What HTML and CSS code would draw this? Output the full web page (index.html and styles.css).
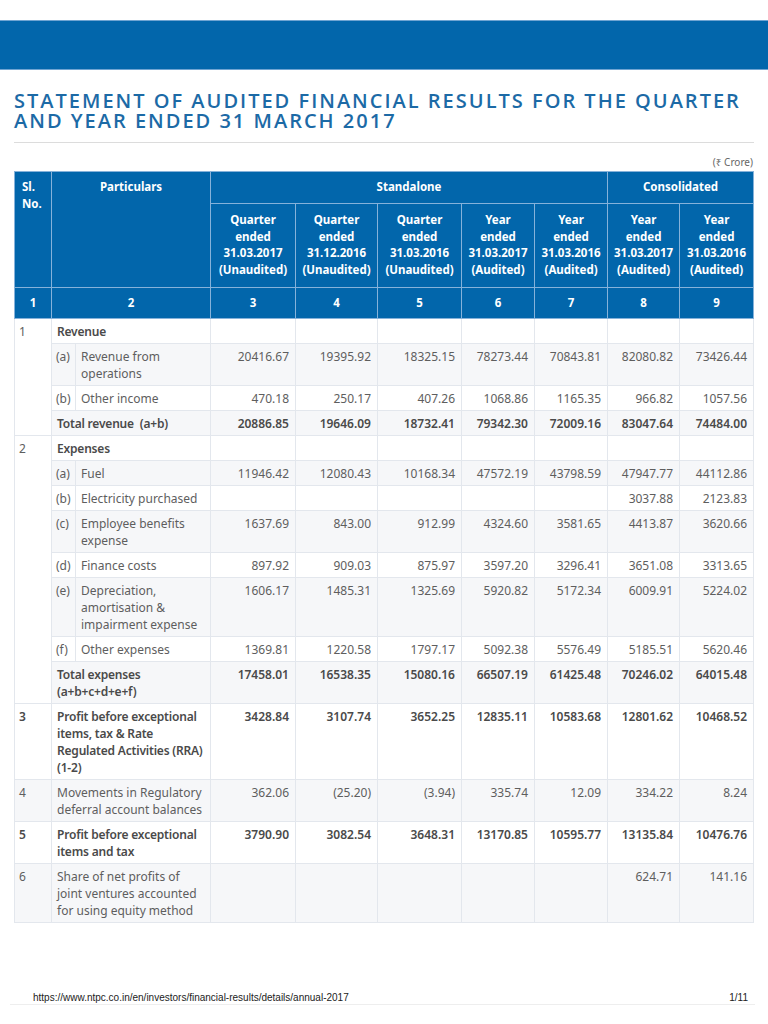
FILE: index.html
```html
<!DOCTYPE html>
<html lang="en">
<head>
<meta charset="utf-8">
<title>Statement of Audited Financial Results</title>
<link rel="stylesheet" href="styles.css">
</head>
<body>
<div class="topbar"></div>
<main class="page">
  <h1 class="title">STATEMENT OF AUDITED FINANCIAL RESULTS FOR THE QUARTER AND YEAR ENDED 31 MARCH 2017</h1>
  <div class="unit">(₹ Crore)</div>
  <table class="fin">
    <colgroup>
      <col class="c-sl"><col class="c-sub"><col class="c-label">
      <col class="c-q1"><col class="c-q2"><col class="c-q3">
      <col class="c-y6"><col class="c-y7"><col class="c-y8"><col class="c-y9">
    </colgroup>
    <thead>
      <tr>
        <th rowspan="2" class="top sl-h">Sl.<br>No.</th>
        <th rowspan="2" colspan="2" class="top">Particulars</th>
        <th colspan="5">Standalone</th>
        <th colspan="2">Consolidated</th>
      </tr>
      <tr class="sub">
        <th>Quarter<br>ended<br>31.03.2017<br>(Unaudited)</th>
        <th>Quarter<br>ended<br>31.12.2016<br>(Unaudited)</th>
        <th>Quarter<br>ended<br>31.03.2016<br>(Unaudited)</th>
        <th>Year<br>ended<br>31.03.2017<br>(Audited)</th>
        <th>Year<br>ended<br>31.03.2016<br>(Audited)</th>
        <th>Year<br>ended<br>31.03.2017<br>(Audited)</th>
        <th>Year<br>ended<br>31.03.2016<br>(Audited)</th>
      </tr>
      <tr>
        <th>1</th><th colspan="2">2</th><th>3</th><th>4</th><th>5</th><th>6</th><th>7</th><th>8</th><th>9</th>
      </tr>
    </thead>
    <tbody>
      <tr class="w">
        <td rowspan="4" class="sl">1</td>
        <td colspan="2" class="b">Revenue</td>
        <td></td><td></td><td></td><td></td><td></td><td></td><td></td>
      </tr>
      <tr class="g">
        <td class="ix">(a)</td><td>Revenue from operations</td>
        <td class="n">20416.67</td><td class="n">19395.92</td><td class="n">18325.15</td><td class="n">78273.44</td><td class="n">70843.81</td><td class="n">82080.82</td><td class="n">73426.44</td>
      </tr>
      <tr class="w">
        <td class="ix">(b)</td><td>Other income</td>
        <td class="n">470.18</td><td class="n">250.17</td><td class="n">407.26</td><td class="n">1068.86</td><td class="n">1165.35</td><td class="n">966.82</td><td class="n">1057.56</td>
      </tr>
      <tr class="g bold">
        <td colspan="2">Total revenue&nbsp; (a+b)</td>
        <td class="n">20886.85</td><td class="n">19646.09</td><td class="n">18732.41</td><td class="n">79342.30</td><td class="n">72009.16</td><td class="n">83047.64</td><td class="n">74484.00</td>
      </tr>
      <tr class="w">
        <td rowspan="8" class="sl">2</td>
        <td colspan="2" class="b">Expenses</td>
        <td></td><td></td><td></td><td></td><td></td><td></td><td></td>
      </tr>
      <tr class="g">
        <td class="ix">(a)</td><td>Fuel</td>
        <td class="n">11946.42</td><td class="n">12080.43</td><td class="n">10168.34</td><td class="n">47572.19</td><td class="n">43798.59</td><td class="n">47947.77</td><td class="n">44112.86</td>
      </tr>
      <tr class="w">
        <td class="ix">(b)</td><td>Electricity purchased</td>
        <td class="n"></td><td class="n"></td><td class="n"></td><td class="n"></td><td class="n"></td><td class="n">3037.88</td><td class="n">2123.83</td>
      </tr>
      <tr class="g">
        <td class="ix">(c)</td><td>Employee benefits expense</td>
        <td class="n">1637.69</td><td class="n">843.00</td><td class="n">912.99</td><td class="n">4324.60</td><td class="n">3581.65</td><td class="n">4413.87</td><td class="n">3620.66</td>
      </tr>
      <tr class="w">
        <td class="ix">(d)</td><td>Finance costs</td>
        <td class="n">897.92</td><td class="n">909.03</td><td class="n">875.97</td><td class="n">3597.20</td><td class="n">3296.41</td><td class="n">3651.08</td><td class="n">3313.65</td>
      </tr>
      <tr class="g">
        <td class="ix">(e)</td><td>Depreciation, amortisation &amp; impairment expense</td>
        <td class="n">1606.17</td><td class="n">1485.31</td><td class="n">1325.69</td><td class="n">5920.82</td><td class="n">5172.34</td><td class="n">6009.91</td><td class="n">5224.02</td>
      </tr>
      <tr class="w">
        <td class="ix">(f)</td><td>Other expenses</td>
        <td class="n">1369.81</td><td class="n">1220.58</td><td class="n">1797.17</td><td class="n">5092.38</td><td class="n">5576.49</td><td class="n">5185.51</td><td class="n">5620.46</td>
      </tr>
      <tr class="g bold">
        <td colspan="2">Total expenses (a+b+c+d+e+f)</td>
        <td class="n">17458.01</td><td class="n">16538.35</td><td class="n">15080.16</td><td class="n">66507.19</td><td class="n">61425.48</td><td class="n">70246.02</td><td class="n">64015.48</td>
      </tr>
      <tr class="w bold">
        <td class="sl">3</td>
        <td colspan="2">Profit before exceptional items, tax &amp; Rate Regulated Activities (RRA) (1-2)</td>
        <td class="n">3428.84</td><td class="n">3107.74</td><td class="n">3652.25</td><td class="n">12835.11</td><td class="n">10583.68</td><td class="n">12801.62</td><td class="n">10468.52</td>
      </tr>
      <tr class="g">
        <td class="sl">4</td>
        <td colspan="2">Movements in Regulatory deferral account balances</td>
        <td class="n">362.06</td><td class="n">(25.20)</td><td class="n">(3.94)</td><td class="n">335.74</td><td class="n">12.09</td><td class="n">334.22</td><td class="n">8.24</td>
      </tr>
      <tr class="w bold">
        <td class="sl">5</td>
        <td colspan="2">Profit before exceptional items and tax</td>
        <td class="n">3790.90</td><td class="n">3082.54</td><td class="n">3648.31</td><td class="n">13170.85</td><td class="n">10595.77</td><td class="n">13135.84</td><td class="n">10476.76</td>
      </tr>
      <tr class="g">
        <td class="sl">6</td>
        <td colspan="2">Share of net profits of joint ventures accounted for using equity method</td>
        <td class="n"></td><td class="n"></td><td class="n"></td><td class="n"></td><td class="n"></td><td class="n">624.71</td><td class="n">141.16</td>
      </tr>
    </tbody>
  </table>
</main>
<footer class="foot">
  <span class="url">https://www.ntpc.co.in/en/investors/financial-results/details/annual-2017</span>
  <span class="pg">1/11</span>
</footer>
</body>
</html>
```
FILE: styles.css
```css
* { box-sizing: border-box; }
html, body { margin: 0; padding: 0; background: #fff; }
body { font-family: "Noto Sans", "Liberation Sans", sans-serif; color: #5a5a5a; width: 768px; height: 1024px; position: relative; }

.topbar {
  margin-top: 20px;
  height: 50px;
  background: #0266ab;
  border-top: 1px solid #6fa4d2;
  border-bottom: 1px solid #6fa4d2;
}

.page { padding: 0 14px; }

.title {
  margin: 21px 0 0;
  padding: 0 0 11px;
  font-family: "Open Sans", "Noto Sans", sans-serif;
  font-weight: 600;
  font-size: 20px;
  line-height: 20px;
  color: #1c6aa6;
  letter-spacing: 2px;
  border-bottom: 1px solid #dcdcdc;
}

.unit {
  margin-top: 12px;
  text-align: right;
  font-size: 10px;
  line-height: 14px;
  color: #666;
  padding-right: 1px;
}

.fin {
  margin-top: 2px;
  width: 739px;
  table-layout: fixed;
  border-collapse: collapse;
  font-size: 12px;
}
.c-sl { width: 37px; }
.c-sub { width: 24px; }
.c-label { width: 135px; }
.c-q1 { width: 85px; }
.c-q2 { width: 82px; }
.c-q3 { width: 84px; }
.c-y6 { width: 73px; }
.c-y7 { width: 73px; }
.c-y8 { width: 72px; }
.c-y9 { width: 74px; }

.fin th {
  background: #0266ab;
  color: #fff;
  font-weight: 700;
  font-size: 11.5px;
  line-height: 16.5px;
  padding: 7px 2px;
  border: 1px solid #86b2da;
  text-align: center;
  vertical-align: middle;
}
.fin th.top { vertical-align: top; }
.fin th.sl-h { text-align: left; padding-left: 7px; }
.fin tr.sub th { padding: 8.5px 2px; }

.fin td {
  border: 1px solid #e3e7ed;
  padding: 4px 6px 3px 5px;
  line-height: 17px;
  vertical-align: top;
  color: #5e5e5e;
}
.fin tr.g td { background: #f6f7f9; }
.fin tr.w td { background: #fff; }
.fin td.sl { background: #fff; padding-left: 4px; }
.fin td.ix { padding-left: 4px; padding-right: 2px; }
.fin td.n { text-align: right; padding-right: 6px; }
.fin td.b, .fin tr.bold td { font-weight: 600; color: #4a4a4a; letter-spacing: -0.2px; }
.fin tr.bold td.n { letter-spacing: 0; }

.foot {
  position: absolute;
  left: 10px;
  right: 13px;
  top: 991px;
  height: 14px;
  border-bottom: 1px solid #eeeeee;
  font-family: "Liberation Sans", Arial, sans-serif;
  font-size: 10px;
  line-height: 13px;
  color: #222;
  display: flex;
  justify-content: space-between;
  padding: 0 7px 0 23px;
}
```
